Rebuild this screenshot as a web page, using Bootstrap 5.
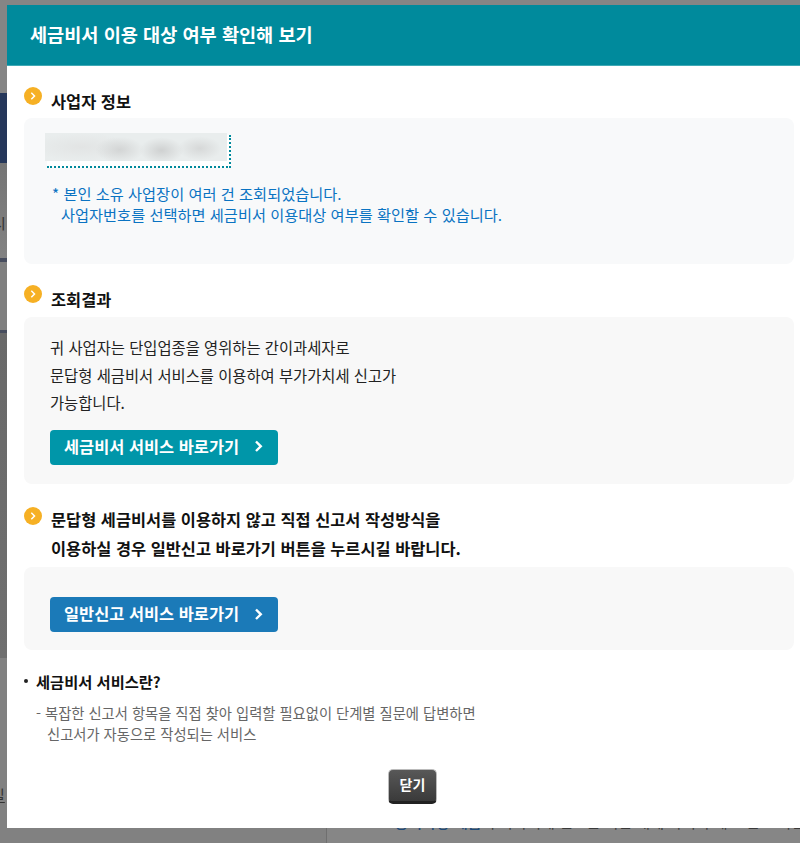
<!DOCTYPE html>
<html lang="ko">
<head>
<meta charset="utf-8">
<title>세금비서 이용 대상 여부 확인해 보기</title>
<link rel="stylesheet" href="https://cdn.jsdelivr.net/npm/bootstrap@5.3.0/dist/css/bootstrap.min.css">
<style>
html,body{height:843px;overflow:hidden;margin:0}
body{background:#818181;font-family:"Noto Sans CJK KR","Noto Sans",sans-serif;color:#111;position:relative}
.backdrop-top{height:93px;background:#858585}
.backdrop-band{height:70px;background:#25375a}
.backdrop-mid{height:95px;background:linear-gradient(#757575,#828282)}
.backdrop-rule{height:4px;background:#474d5e}
.backdrop-mid2{height:68px;background:#7f7f7f}
.backdrop-rule2{height:3px;background:#474d5e}
.backdrop-dark{height:325px;background:linear-gradient(#696969,#6f6f6f)}
.backdrop-frag-a{position:absolute;left:-8px;top:212px;font-size:15px;color:#333}
.backdrop-frag-b{position:absolute;left:-9px;top:784px;font-size:15px;color:#333;text-decoration:underline}
.backdrop-foot{position:absolute;left:326px;top:828px;width:474px;height:15px;border-left:1px solid #6f6f6f;background:#868686;overflow:hidden}
.backdrop-foot-text{position:absolute;left:58px;top:-17px;font-size:15px;white-space:nowrap;color:#3a3a3a}
.backdrop-foot-text b{font-weight:500;color:#1f4a78}
.dialog-box{position:absolute;left:7px;top:5px;width:793px;height:823px;background:#fff}
.dialog-head{height:61px;background:#008a9c;border-bottom:1px solid #3fa9b5;padding-left:23px;color:#fff;font-size:18.6px;font-weight:700;line-height:57px}
.dialog-body{padding:0 6px 0 17px}
.sect-title{font-size:16.4px;font-weight:700;line-height:24px;color:#111}
.bullet-ico{width:18px;height:18px;flex:none;margin-right:9px}
.title-one{margin-top:23px}
.title-one .bullet-ico{margin-top:-2px}
.title-two{margin-top:23px}
.title-two .bullet-ico{margin-top:-2px}
.title-three{margin-top:21px;line-height:29px}
.title-three .bullet-ico{margin-top:2px}
.panel-soft{background:#f8f8f8;border-radius:8px}
.panel-info{height:146px;margin-top:5px;padding:17px 0 0 21px;background:#f8f9fa}
.blur-field{width:184px;height:33px;border:2px dotted #00899b;border-left:0;border-top:0;position:relative;margin-left:2px;background:#fff}
.blur-field::before{content:"";position:absolute;left:-2px;top:-2px;width:182px;height:28px;background:radial-gradient(ellipse 24px 13px at 41% 60%,#d3d5d5,transparent),radial-gradient(ellipse 22px 13px at 64% 62%,#cfd1d1,transparent),radial-gradient(ellipse 22px 12px at 85% 55%,#d6d8d8,transparent),radial-gradient(ellipse 50px 14px at 20% 50%,#e2e4e4,transparent),#e9eded}
.note-blue{color:#0a73c2;font-size:15.25px;line-height:21px;margin:15px 0 0 7px}
.note-line2{padding-left:9px}
.panel-result{height:167px;margin-top:6px;padding:17px 26px 0;font-size:15.35px;line-height:27.5px;color:#222}
.go-btn{display:flex;align-items:center;justify-content:space-between;width:228px;height:35px;padding:0 14px 2px 14px;border:0;border-radius:4px;color:#fff;font-size:16.4px;font-weight:700;text-align:left}
.go-teal{background:#0096a9;margin-top:13px}
.go-blue{background:#1b7ab8}
.panel-normal{height:83px;margin-top:4px;padding:30px 26px 0}
.desc-head{font-size:15.3px;font-weight:700;line-height:22px;padding-left:12px;position:relative;color:#111;margin-top:20px}
.desc-head::before{content:"";position:absolute;left:0;top:9px;width:4px;height:4px;border-radius:50%;background:#222}
.desc-list{font-size:14.3px;line-height:21px;color:#666;margin:10px 0 0 12px}
.desc-line2{padding-left:11px}
.close-btn{display:block;width:49px;height:35px;padding:0 0 3px;border:1px solid #bbb;border-radius:5px;background:linear-gradient(#585858,#3a3a3a);border-bottom:3px solid #222;color:#fff;font-size:14px;font-weight:700;line-height:24px;margin:25px auto 0 364px}
</style>
</head>
<body>
<div class="backdrop-top"></div>
<div class="backdrop-band"></div>
<div class="backdrop-mid"></div>
<div class="backdrop-rule"></div>
<div class="backdrop-mid2"></div>
<div class="backdrop-rule2"></div>
<div class="backdrop-dark"></div>
<span class="backdrop-frag-a">시</span>
<span class="backdrop-frag-b">일</span>
<div class="backdrop-foot"><span class="backdrop-foot-text"><b>• 공지사항 세금</b> 부가가치세 신고는 기한 내에 마쳐 주세요 신고 기한</span></div>

<div class="dialog-box">
  <div class="dialog-head">세금비서 이용 대상 여부 확인해 보기</div>
  <div class="dialog-body">
    <div class="d-flex sect-title title-one align-items-start">
      <svg class="bullet-ico" viewBox="0 0 18 18"><circle cx="9" cy="9" r="9" fill="#f6b024"/><path d="M7.3 5.8 10.5 9l-3.2 3.2" fill="none" stroke="#fff" stroke-width="1.5"/></svg>
      <span>사업자 정보</span>
    </div>
    <div class="panel-soft panel-info">
      <div class="blur-field"></div>
      <div class="note-blue">
        <div>* 본인 소유 사업장이 여러 건 조회되었습니다.</div>
        <div class="note-line2">사업자번호를 선택하면 세금비서 이용대상 여부를 확인할 수 있습니다.</div>
      </div>
    </div>

    <div class="d-flex sect-title title-two align-items-start">
      <svg class="bullet-ico" viewBox="0 0 18 18"><circle cx="9" cy="9" r="9" fill="#f6b024"/><path d="M7.3 5.8 10.5 9l-3.2 3.2" fill="none" stroke="#fff" stroke-width="1.5"/></svg>
      <span>조회결과</span>
    </div>
    <div class="panel-soft panel-result">
      <div>귀 사업자는 단입업종을 영위하는 간이과세자로<br>문답형 세금비서 서비스를 이용하여 부가가치세 신고가<br>가능합니다.</div>
      <button type="button" class="btn go-btn go-teal"><span>세금비서 서비스 바로가기</span><svg width="10" height="14" viewBox="0 0 10 14"><path d="M2 2.5l4.8 4.8L2 12" fill="none" stroke="#fff" stroke-width="2.4"/></svg></button>
    </div>

    <div class="d-flex sect-title title-three align-items-start">
      <svg class="bullet-ico" viewBox="0 0 18 18"><circle cx="9" cy="9" r="9" fill="#f6b024"/><path d="M7.3 5.8 10.5 9l-3.2 3.2" fill="none" stroke="#fff" stroke-width="1.5"/></svg>
      <span>문답형 세금비서를 이용하지 않고 직접 신고서 작성방식을<br>이용하실 경우 일반신고 바로가기 버튼을 누르시길 바랍니다.</span>
    </div>
    <div class="panel-soft panel-normal">
      <button type="button" class="btn go-btn go-blue"><span>일반신고 서비스 바로가기</span><svg width="10" height="14" viewBox="0 0 10 14"><path d="M2 2.5l4.8 4.8L2 12" fill="none" stroke="#fff" stroke-width="2.4"/></svg></button>
    </div>

    <div class="desc-head">세금비서 서비스란?</div>
    <div class="desc-list">
      <div>- 복잡한 신고서 항목을 직접 찾아 입력할 필요없이 단계별 질문에 답변하면</div>
      <div class="desc-line2">신고서가 자동으로 작성되는 서비스</div>
    </div>
    <button type="button" class="btn close-btn">닫기</button>
  </div>
</div>
<script src="https://cdn.jsdelivr.net/npm/bootstrap@5.3.0/dist/js/bootstrap.bundle.min.js"></script>
</body>
</html>
